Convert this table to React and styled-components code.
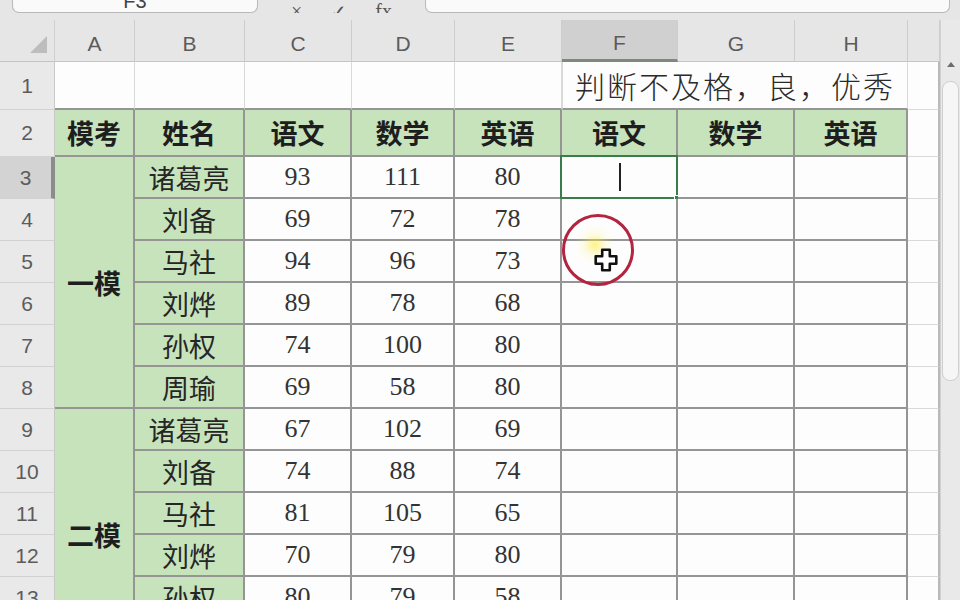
import React from 'react'
import styled, { createGlobalStyle, css } from 'styled-components'

const GlobalStyle = createGlobalStyle`
  html, body {
    margin: 0;
    padding: 0;
    background: #e6e6e6;
  }
  * { box-sizing: border-box; }
`

const COLS = ['A', 'B', 'C', 'D', 'E', 'F', 'G', 'H', '']
const GRID_LINE = '#959595'
const LIGHT_LINE = '#d9d9d9'
const GREEN = '#c7e3bc'

const Page = styled.div`
  position: relative;
  width: 960px;
  height: 600px;
  overflow: hidden;
  display: flex;
  flex-direction: column;
  font-family: 'Noto Sans CJK SC', 'Liberation Sans', sans-serif;
`

const Toolbar = styled.div`
  height: 20px;
  display: flex;
  align-items: flex-start;
  padding-left: 12px;
  overflow: hidden;
`

const NameBox = styled.div`
  width: 246px;
  height: 13px;
  background: #fafafa;
  border: 1px solid #b9b9b9;
  border-top: none;
  border-radius: 0 0 7px 7px;
  overflow: hidden;
  color: #444;
  font: 20px 'Liberation Sans', sans-serif;
  text-align: center;
  line-height: 2px;
`

const FormulaIcons = styled.div`
  width: 167px;
  height: 13px;
  display: flex;
  justify-content: center;
  gap: 28px;
  overflow: hidden;
  line-height: 2px;
  color: #555;
  font: 20px 'Liberation Serif', serif;
`

const FormulaBar = styled.div`
  width: 525px;
  height: 13px;
  background: #fafafa;
  border: 1px solid #b9b9b9;
  border-top: none;
  border-radius: 0 0 7px 7px;
`

const Body = styled.div`
  flex: 1;
  display: flex;
  min-height: 0;
`

const Sheet = styled.div`
  width: 940px;
  display: grid;
  grid-template-columns: 55px 80px 110px 107px 103px 107px 116px 117px 113px 32px;
  grid-template-rows: 42px 48px 47px repeat(12, 42px);
  overflow: hidden;
`

const Corner = styled.div`
  border-right: 1px solid #cfcfcf;
  border-bottom: 1px solid #c4c4c4;
  display: flex;
  align-items: flex-end;
  justify-content: flex-end;
  padding: 0 7px 8px 0;
`

const CornerMark = styled.div`
  width: 0;
  height: 0;
  border-left: 17px solid transparent;
  border-bottom: 17px solid #bdbdbd;
`

const ColHead = styled.div`
  display: flex;
  align-items: center;
  justify-content: center;
  padding-top: 6px;
  font: 21px 'Liberation Sans', sans-serif;
  color: #5c5c5c;
  border-right: 1px solid #cdcdcd;
  border-bottom: 1px solid #c4c4c4;
  ${(p) =>
    p.$active &&
    css`
      background: #d0d0d0;
      border-bottom: 3px solid #7c8a7e;
    `}
`

const RowHead = styled.div`
  display: flex;
  align-items: center;
  justify-content: center;
  font: 21px 'Liberation Sans', sans-serif;
  color: #5c5c5c;
  background: #e9e9e9;
  border-right: 1px solid #c9c9c9;
  border-bottom: 1px solid #d2d2d2;
  ${(p) =>
    p.$active &&
    css`
      background: #d3d3d3;
      border-right: 4px solid #8c8c8c;
    `}
`

const Cell = styled.div`
  position: relative;
  display: flex;
  align-items: center;
  justify-content: center;
  background: ${(p) => (p.$green ? GREEN : '#fdfdfd')};
  border-right: 2px solid ${GRID_LINE};
  border-bottom: 2px solid ${GRID_LINE};
  color: #262626;
  font-size: 27px;
  ${(p) =>
    p.$bold &&
    css`
      font-weight: 700;
      color: #1e1e1e;
    `}
  ${(p) =>
    p.$num &&
    css`
      font-family: 'Liberation Serif', serif;
      font-size: 26px;
      color: #333;
    `}
  ${(p) =>
    p.$light &&
    css`
      border-right: 1px solid ${LIGHT_LINE};
    `}
  ${(p) =>
    p.$edge &&
    css`
      border-right: 2px solid #b9b9b9;
      border-bottom: 1px solid ${LIGHT_LINE};
    `}
`

const Title = styled(Cell)`
  grid-column: span 3;
  font-weight: 300;
  font-size: 30px;
  letter-spacing: 2px;
  color: #2a2a2a;
  border-left: 1px solid ${LIGHT_LINE};
  border-right: 1px solid ${LIGHT_LINE};
`

const Group = styled(Cell)`
  grid-row: span 6;
`

const Selected = styled.div`
  position: absolute;
  inset: -2px;
  border: 2px solid #3a7d4a;
`

const FillHandle = styled.div`
  position: absolute;
  right: -4px;
  bottom: -4px;
  width: 6px;
  height: 6px;
  background: #3a7d4a;
  border: 1px solid #fff;
`

const Caret = styled.div`
  width: 2px;
  height: 28px;
  margin-left: 2px;
  background: #222;
`

const Scrollbar = styled.div`
  width: 20px;
  background: #e9e9e9;
  display: flex;
  flex-direction: column;
  align-items: center;
  padding-top: 42px;
  border-left: 1px solid #d2d2d2;
`

const ArrowUp = styled.div`
  width: 0;
  height: 0;
  border-left: 4px solid transparent;
  border-right: 4px solid transparent;
  border-bottom: 5px solid #6d6d6d;
`

const Thumb = styled.div`
  margin-top: 14px;
  width: 17px;
  height: 300px;
  background: #f6f6f6;
  border: 1px solid #cfcfcf;
  border-radius: 8px;
`

const Highlight = styled.div`
  position: absolute;
  left: 562px;
  top: 214px;
  width: 72px;
  height: 72px;
  border: 3px solid #b2243f;
  border-radius: 50%;
  background: radial-gradient(circle at 45% 42%, rgba(255, 236, 40, 0.55) 0, rgba(255, 240, 120, 0.15) 22%, transparent 38%);
`

const Pointer = styled.svg`
  position: absolute;
  left: 593px;
  top: 247px;
`

const rows = [
  ['诸葛亮', 93, 111, 80],
  ['刘备', 69, 72, 78],
  ['马社', 94, 96, 73],
  ['刘烨', 89, 78, 68],
  ['孙权', 74, 100, 80],
  ['周瑜', 69, 58, 80],
  ['诸葛亮', 67, 102, 69],
  ['刘备', 74, 88, 74],
  ['马社', 81, 105, 65],
  ['刘烨', 70, 79, 80],
  ['孙权', 80, 79, 58],
  ['周瑜', 69, 90, 76]
]

const heads = ['模考', '姓名', '语文', '数学', '英语', '语文', '数学', '英语']

const App = () => {
  return (
    <Page>
      <GlobalStyle />
      <Toolbar>
        <NameBox>F3</NameBox>
        <FormulaIcons>
          <span>×</span>
          <span>✓</span>
          <span>fx</span>
        </FormulaIcons>
        <FormulaBar />
      </Toolbar>
      <Body>
        <Sheet>
          <Corner>
            <CornerMark />
          </Corner>
          {COLS.map((c, i) => (
            <ColHead key={i} $active={c === 'F'}>
              {c}
            </ColHead>
          ))}

          <RowHead>1</RowHead>
          {[0, 1, 2, 3, 4].map((i) => (
            <Cell key={i} $light />
          ))}
          <Title>判断不及格，良，优秀</Title>
          <Cell $edge />

          <RowHead>2</RowHead>
          {heads.map((h, i) => (
            <Cell key={i} $green $bold>
              {h}
            </Cell>
          ))}
          <Cell $edge />

          {rows.map((r, i) => {
            const n = i + 3
            return (
              <React.Fragment key={n}>
                <RowHead $active={n === 3}>{n}</RowHead>
                {i % 6 === 0 && (
                  <Group $green $bold>
                    {i === 0 ? '一模' : '二模'}
                  </Group>
                )}
                <Cell $green>{r[0]}</Cell>
                <Cell $num>{r[1]}</Cell>
                <Cell $num>{r[2]}</Cell>
                <Cell $num>{r[3]}</Cell>
                <Cell>
                  {n === 3 && (
                    <>
                      <Caret />
                      <Selected />
                      <FillHandle />
                    </>
                  )}
                </Cell>
                <Cell />
                <Cell />
                <Cell $edge />
              </React.Fragment>
            )
          })}
        </Sheet>
        <Scrollbar>
          <ArrowUp />
          <Thumb />
        </Scrollbar>
      </Body>
      <Highlight />
      <Pointer width='26' height='26' viewBox='0 0 24 24'>
        <path
          d='M8.5 2.5 h7 v6 h6 v7 h-6 v6 h-7 v-6 h-6 v-7 h6 z'
          fill='#fff'
          stroke='#111'
          strokeWidth='2.4'
          strokeLinejoin='round'
        />
      </Pointer>
    </Page>
  )
}

export default App
